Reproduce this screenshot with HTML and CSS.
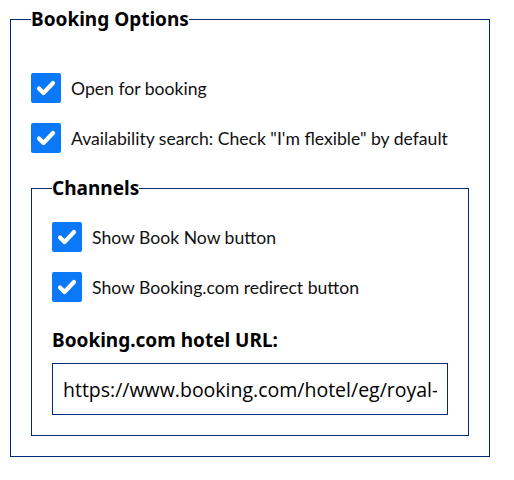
FILE: index.html
```html
<!DOCTYPE html>
<html lang="en">
<head>
  <meta charset="UTF-8">
  <meta name="viewport" content="width=device-width, initial-scale=1.0">
  <title>Booking Options</title>
  <link rel="stylesheet" href="styles.css">
</head>
<body>
  <fieldset class="options">
    <legend>Booking Options</legend>
    <div class="option-list">
      <label class="option">
        <span class="check"><svg viewBox="0 0 30 30"><path d="M8 15.5l4.5 4.5 9.5-10"/></svg></span>
        <span class="option-text">Open for booking</span>
      </label>
      <label class="option">
        <span class="check"><svg viewBox="0 0 30 30"><path d="M8 15.5l4.5 4.5 9.5-10"/></svg></span>
        <span class="option-text">Availability search: Check "I'm flexible" by default</span>
      </label>
    </div>
    <fieldset class="channels">
      <legend>Channels</legend>
      <div class="option-list">
        <label class="option">
          <span class="check"><svg viewBox="0 0 30 30"><path d="M8 15.5l4.5 4.5 9.5-10"/></svg></span>
          <span class="option-text">Show Book Now button</span>
        </label>
        <label class="option">
          <span class="check"><svg viewBox="0 0 30 30"><path d="M8 15.5l4.5 4.5 9.5-10"/></svg></span>
          <span class="option-text">Show Booking.com redirect button</span>
        </label>
      </div>
      <div class="url-field">
        <label class="url-label" for="hotel-url">Booking.com hotel URL:</label>
        <input id="hotel-url" class="url-input" type="text" value="https://www.booking.com/hotel/eg/royal-maxim-palace-kempinski.html">
      </div>
    </fieldset>
  </fieldset>
</body>
</html>
```

FILE: styles.css
```css
body {
  margin: 8px;
  background: #fff;
  color: #000;
  font-family: 'Noto Sans', sans-serif;
}
fieldset {
  border: 1px solid #00297a;
  margin: 0;
}
legend {
  padding: 0;
  font-weight: bold;
  font-size: 19px;
  line-height: 22px;
}
.options {
  width: 480px;
  margin: 0 0 0 2px;
  padding: 43px 20px 20px 20px;
  box-sizing: border-box;
}
.option-list {
  display: flex;
  flex-direction: column;
  gap: 20px;
}
.option {
  display: flex;
  align-items: center;
  gap: 10px;
}
.check {
  width: 30px;
  height: 30px;
  background: #0b78f7;
  border-radius: 2px;
  display: flex;
}
.check svg {
  width: 30px;
  height: 30px;
  fill: none;
  stroke: #fff;
  stroke-width: 4.2;
  stroke-linecap: round;
  stroke-linejoin: round;
}
.option-text {
  font-family: 'Lato', sans-serif;
  font-size: 17.6px;
  color: #111;
}
.channels {
  margin-top: 24px;
  padding: 23px 20px 20px 20px;
}
.url-field {
  display: flex;
  flex-direction: column;
  gap: 10px;
  margin-top: 25px;
}
.url-label {
  font-weight: bold;
  font-size: 19px;
}
.url-input {
  border: 1px solid #00297a;
  height: 52px;
  box-sizing: border-box;
  padding: 0 10px;
  font-family: 'Open Sans', sans-serif;
  font-size: 19.5px;
  color: #000;
  width: 100%;
}
```
